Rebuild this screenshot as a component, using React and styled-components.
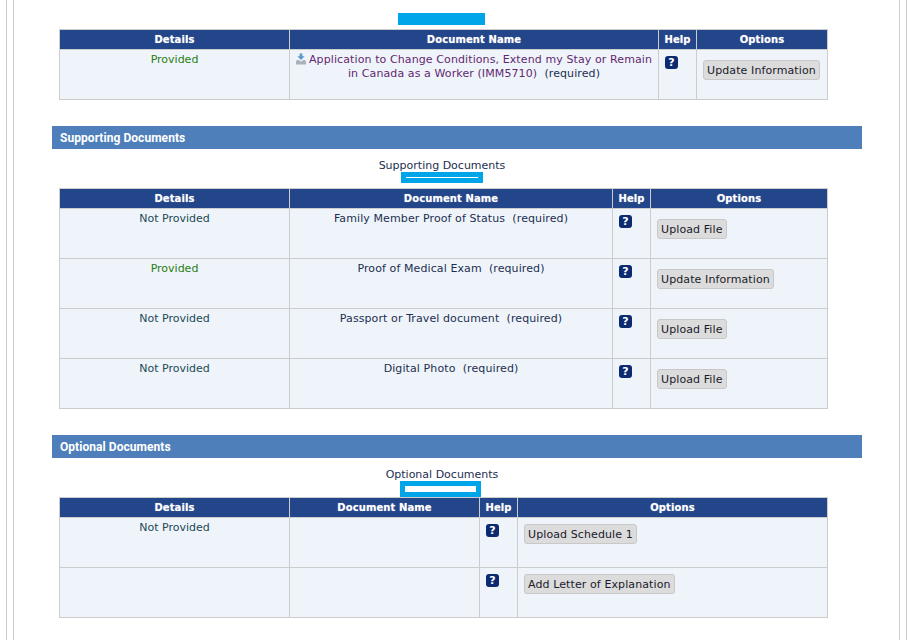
import styled, { createGlobalStyle } from "styled-components";

const GlobalStyle = createGlobalStyle`
  html, body {
    margin: 0;
    padding: 0;
    height: 100%;
    overflow: hidden;
    background: #fff;
    font-family: "DejaVu Sans", Verdana, sans-serif;
    font-size: 11px;
    color: #1c2f50;
  }
`;

const OuterFrame = styled.div`
  box-sizing: border-box;
  width: 901px;
  height: 640px;
  margin-left: 6px;
  border-left: 1px solid #ccc;
  border-right: 1px solid #ccc;
  padding: 0 6px;
`;

const InnerFrame = styled.div`
  box-sizing: border-box;
  height: 640px;
  border-left: 1px solid #ccc;
  border-right: 1px solid #ccc;
  padding: 13px 36px 0 38px;
`;

const Section = styled.section`
  display: flex;
  flex-direction: column;
  align-items: flex-start;
`;

const SectionBar = styled.div`
  box-sizing: border-box;
  width: 810px;
  height: 23px;
  margin-top: 26px;
  padding-left: 8px;
  background: #4f7fba;
  color: #fff;
  font-family: Roboto, "Liberation Sans", sans-serif;
  font-size: 12px;
  font-weight: 700;
  letter-spacing: 0.05px;
  line-height: 24px;
`;

const Caption = styled.div`
  width: 766px;
  height: 13px;
  margin: 10px 0 0 7px;
  line-height: 13px;
  text-align: center;
`;

const Highlight = styled.div`
  box-sizing: border-box;
  width: ${(props) => props.$width}px;
  height: ${(props) => props.$height}px;
  margin-bottom: ${(props) => props.$bottom}px;
  margin-left: ${(props) => props.$left}px;
  background: #00a4e8;
  display: flex;
  align-items: center;
  justify-content: center;
`;

const HighlightLine = styled.div`
  width: ${(props) => props.$width}px;
  height: ${(props) => props.$height}px;
  background: #fff;
`;

const DocTable = styled.table`
  table-layout: fixed;
  width: 768px;
  margin-left: 7px;
  border-collapse: collapse;
  border: 1px solid #ccc;
`;

const HeadCell = styled.th`
  box-sizing: border-box;
  height: 20px;
  padding: 0;
  background: #234589;
  border: 1px solid #ccc;
  color: #fff;
  font-size: 10px;
  font-weight: 700;
  letter-spacing: 0.1px;
  text-align: center;
  vertical-align: middle;
  text-shadow: 0 0 1px rgba(255, 255, 255, 0.5);
`;

const Cell = styled.td`
  box-sizing: border-box;
  height: 50px;
  padding: 3px 5px 0;
  background: #eff4fb;
  border: 1px solid #ccc;
  vertical-align: top;
  text-align: center;
  line-height: 14px;
  letter-spacing: 0.1px;
`;

const HelpCell = styled(Cell)`
  padding: 6px 0 0 6px;
  text-align: left;
`;

const OptionsCell = styled(Cell)`
  padding: ${(props) => props.$top}px 0 0 6px;
  text-align: left;
`;

const Status = styled.span`
  color: ${(props) => (props.$provided ? "#2a7d10" : "#1c4a55")};
  letter-spacing: 0;
`;

const DocLink = styled.span`
  color: #62286f;
`;

const HelpIcon = styled.span`
  display: block;
  width: 13px;
  height: 13px;
  border-radius: 3px;
  background: #0b2a70;
  color: #fff;
  font-size: 11px;
  font-weight: 700;
  line-height: 13px;
  text-align: center;
  letter-spacing: 0;
`;

const ActionButton = styled.button`
  box-sizing: border-box;
  height: 20px;
  padding: 0 3px;
  border: 1px solid #c8c8c8;
  border-radius: 3px;
  background: #dcdcdc;
  color: #1a1a2a;
  font-family: "DejaVu Sans", Verdana, sans-serif;
  font-size: 11px;
  letter-spacing: 0.1px;
  white-space: nowrap;
`;

const UploadGlyph = styled.svg`
  width: 10px;
  height: 12px;
  margin-right: 3px;
  vertical-align: -2px;
`;

const tables = {
  first: [230, 369, 38, 131],
  supporting: [230, 323, 38, 177],
  optional: [230, 190, 38, 310],
};

const Columns = ({ widths }) => (
  <colgroup>
    {widths.map((w, i) => (
      <col key={i} style={{ width: w }} />
    ))}
  </colgroup>
);

const Head = () => (
  <thead>
    <tr>
      <HeadCell>Details</HeadCell>
      <HeadCell>Document Name</HeadCell>
      <HeadCell>Help</HeadCell>
      <HeadCell>Options</HeadCell>
    </tr>
  </thead>
);

const Row = ({ status, name, action, buttonTop = 10 }) => (
  <tr>
    <Cell>{status && <Status $provided={status === "Provided"}>{status}</Status>}</Cell>
    <Cell>{name}</Cell>
    <HelpCell>
      <HelpIcon>?</HelpIcon>
    </HelpCell>
    <OptionsCell $top={buttonTop}>
      <ActionButton>{action}</ActionButton>
    </OptionsCell>
  </tr>
);

const supportingRows = [
  { status: "Not Provided", name: "Family Member Proof of Status", action: "Upload File" },
  { status: "Provided", name: "Proof of Medical Exam", action: "Update Information" },
  { status: "Not Provided", name: "Passport or Travel document", action: "Upload File" },
  { status: "Not Provided", name: "Digital Photo", action: "Upload File" },
];

const App = () => {
  return (
    <OuterFrame>
      <GlobalStyle />
      <InnerFrame>
        <Section>
          <Highlight $width={87} $height={12} $left={346} $bottom={4} />
          <DocTable>
            <Columns widths={tables.first} />
            <Head />
            <tbody>
              <Row
                status="Provided"
                name={
                  <>
                    <UploadGlyph viewBox="0 0 11 12">
                      <path d="M4 0h3v3h2.500L5.500 7 1.500 3H4z" fill="#5b9bc9" />
                      <path d="M1 7h2l2.500 2L8 7h2l1 2v3H0V9z" fill="#a9b2ba" />
                    </UploadGlyph>
                    <DocLink>
                      Application to Change Conditions, Extend my Stay or Remain in Canada as a
                      Worker (IMM5710)
                    </DocLink>
                    {"\u00a0\u00a0(required)"}
                  </>
                }
                action="Update Information"
              />
            </tbody>
          </DocTable>
        </Section>

        <Section>
          <SectionBar>Supporting Documents</SectionBar>
          <Caption>Supporting Documents</Caption>
          <Highlight $width={82} $height={11} $left={349} $bottom={5}>
            <HighlightLine $width={72} $height={1} />
          </Highlight>
          <DocTable>
            <Columns widths={tables.supporting} />
            <Head />
            <tbody>
              {supportingRows.map((row) => (
                <Row
                  key={row.name}
                  status={row.status}
                  name={`${row.name}\u00a0\u00a0(required)`}
                  action={row.action}
                />
              ))}
            </tbody>
          </DocTable>
        </Section>

        <Section>
          <SectionBar>Optional Documents</SectionBar>
          <Caption>Optional Documents</Caption>
          <Highlight $width={81} $height={16} $left={348} $bottom={0}>
            <HighlightLine $width={71} $height={6} />
          </Highlight>
          <DocTable>
            <Columns widths={tables.optional} />
            <Head />
            <tbody>
              <Row status="Not Provided" action="Upload Schedule 1" buttonTop={6} />
              <Row action="Add Letter of Explanation" buttonTop={6} />
            </tbody>
          </DocTable>
        </Section>
      </InnerFrame>
    </OuterFrame>
  );
};

export default App;
